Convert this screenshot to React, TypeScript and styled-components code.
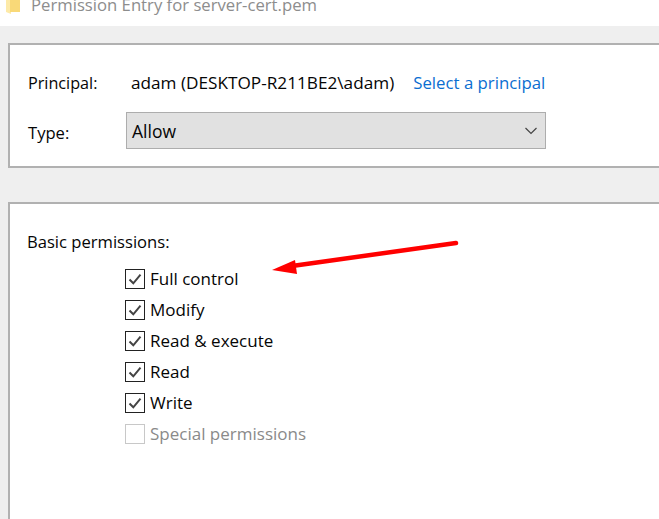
import React from "react";
import styled, { createGlobalStyle } from "styled-components";

const Global = createGlobalStyle`
  html, body { margin: 0; padding: 0; background: #f0f0f0; }
  body { font-family: "Open Sans", "Noto Sans", sans-serif; color: #050505; }
`;

const Page = styled.div`
  position: relative;
  width: 659px;
  height: 519px;
  overflow: hidden;
  background: #efefef;
`;

const TitleBar = styled.div`
  display: flex;
  align-items: flex-end;
  gap: 11px;
  height: 26px;
  box-sizing: border-box;
  padding: 0 0 11px 6px;
  background: #ffffff;
  overflow: hidden;
`;

const TitleText = styled.span`
  font-size: 16.7px;
  line-height: 20px;
  color: #8d8d8d;
  white-space: nowrap;
`;

const Folder = styled.svg`
  flex: none;
  width: 14px;
  height: 15px;
`;

const Panel = styled.section<{ $top: number; $height: number }>`
  box-sizing: border-box;
  margin: ${(p) => p.$top}px -4px 0 8px;
  height: ${(p) => p.$height}px;
  border: 2px solid #b1b1b1;
  background: #ffffff;
`;

const PrincipalBlock = styled.div`
  display: grid;
  grid-template-columns: 98px auto;
  grid-auto-rows: min-content;
  row-gap: 17px;
  padding: 26px 0 0 18px;
  align-items: center;
`;

const Label = styled.span`
  font-size: 16.6px;
  line-height: 24px;
`;

const PrincipalLabel = styled(Label)`
  font-size: 16.2px;
`;

const TypeLabel = styled(Label)`
  margin-top: 5px;
`;

const ValueRow = styled.div`
  display: flex;
  gap: 19px;
  padding-left: 5px;
  font-size: 17.2px;
  line-height: 24px;
  white-space: nowrap;
`;

const Link = styled.a`
  color: #0a6ed1;
  font-size: 16.8px;
`;

const Select = styled.div`
  box-sizing: border-box;
  display: flex;
  align-items: center;
  justify-content: space-between;
  width: 420px;
  height: 37px;
  padding: 0 7px 0 5px;
  background: #e1e1e1;
  border: 1px solid #adadad;
  font-size: 17.5px;
`;

const PermissionsBlock = styled.div`
  padding: 26px 0 0 17px;
`;

const PermList = styled.ul`
  list-style: none;
  margin: 12px 0 0 98px;
  padding: 0;
  display: flex;
  flex-direction: column;
  gap: 6px;
`;

const PermRow = styled.li<{ $disabled?: boolean }>`
  display: flex;
  align-items: center;
  gap: 5px;
  height: 25px;
  font-size: 17px;
  color: ${(p) => (p.$disabled ? "#8a8a8a" : "#050505")};
`;

const Box = styled.span<{ $disabled?: boolean }>`
  box-sizing: border-box;
  display: flex;
  align-items: center;
  justify-content: center;
  width: 20px;
  height: 20px;
  background: #fff;
  border: 1px solid ${(p) => (p.$disabled ? "#c8c8c8" : "#222")};
`;

const Arrow = styled.svg`
  position: absolute;
  left: 0;
  top: 0;
  pointer-events: none;
`;

const perms = ["Full control", "Modify", "Read & execute", "Read", "Write"];

export default function App() {
  return (
    <Page>
      <Global />
      <TitleBar>
        <Folder viewBox="0 0 14 15">
          <path d="M0 0h5v14L0 12z" fill="#fdeaa8" />
          <path d="M4 0h10v12H4z" fill="#f9d978" />
        </Folder>
        <TitleText>Permission Entry for server-cert.pem</TitleText>
      </TitleBar>
      <Panel $top={17} $height={125}>
        <PrincipalBlock>
          <PrincipalLabel>Principal:</PrincipalLabel>
          <ValueRow>
            <span>adam (DESKTOP-R211BE2\adam)</span>
            <Link>Select a principal</Link>
          </ValueRow>
          <TypeLabel>Type:</TypeLabel>
          <Select>
            Allow
            <svg width="14" height="8" viewBox="0 0 14 8">
              <path d="M1.5 1l5.5 5.5L12.5 1" fill="none" stroke="#444" strokeWidth="1.2" />
            </svg>
          </Select>
        </PrincipalBlock>
      </Panel>
      <Panel $top={34} $height={330}>
        <PermissionsBlock>
          <Label>Basic permissions:</Label>
          <PermList>
            {perms.map((p) => (
              <PermRow key={p}>
                <Box>
                  <svg width="14" height="12" viewBox="0 0 14 12">
                    <path d="M1.5 6.5l3.8 3.8 7.2-8.6" fill="none" stroke="#444" strokeWidth="2" />
                  </svg>
                </Box>
                {p}
              </PermRow>
            ))}
            <PermRow $disabled>
              <Box $disabled />
              Special permissions
            </PermRow>
          </PermList>
        </PermissionsBlock>
      </Panel>
      <Arrow width="659" height="519" viewBox="0 0 659 519">
        <path d="M456 243L292 266" stroke="#ff0000" strokeWidth="4.5" strokeLinecap="round" fill="none" />
        <path d="M272 270L295 260L297 274z" fill="#ff0000" />
      </Arrow>
    </Page>
  );
}
